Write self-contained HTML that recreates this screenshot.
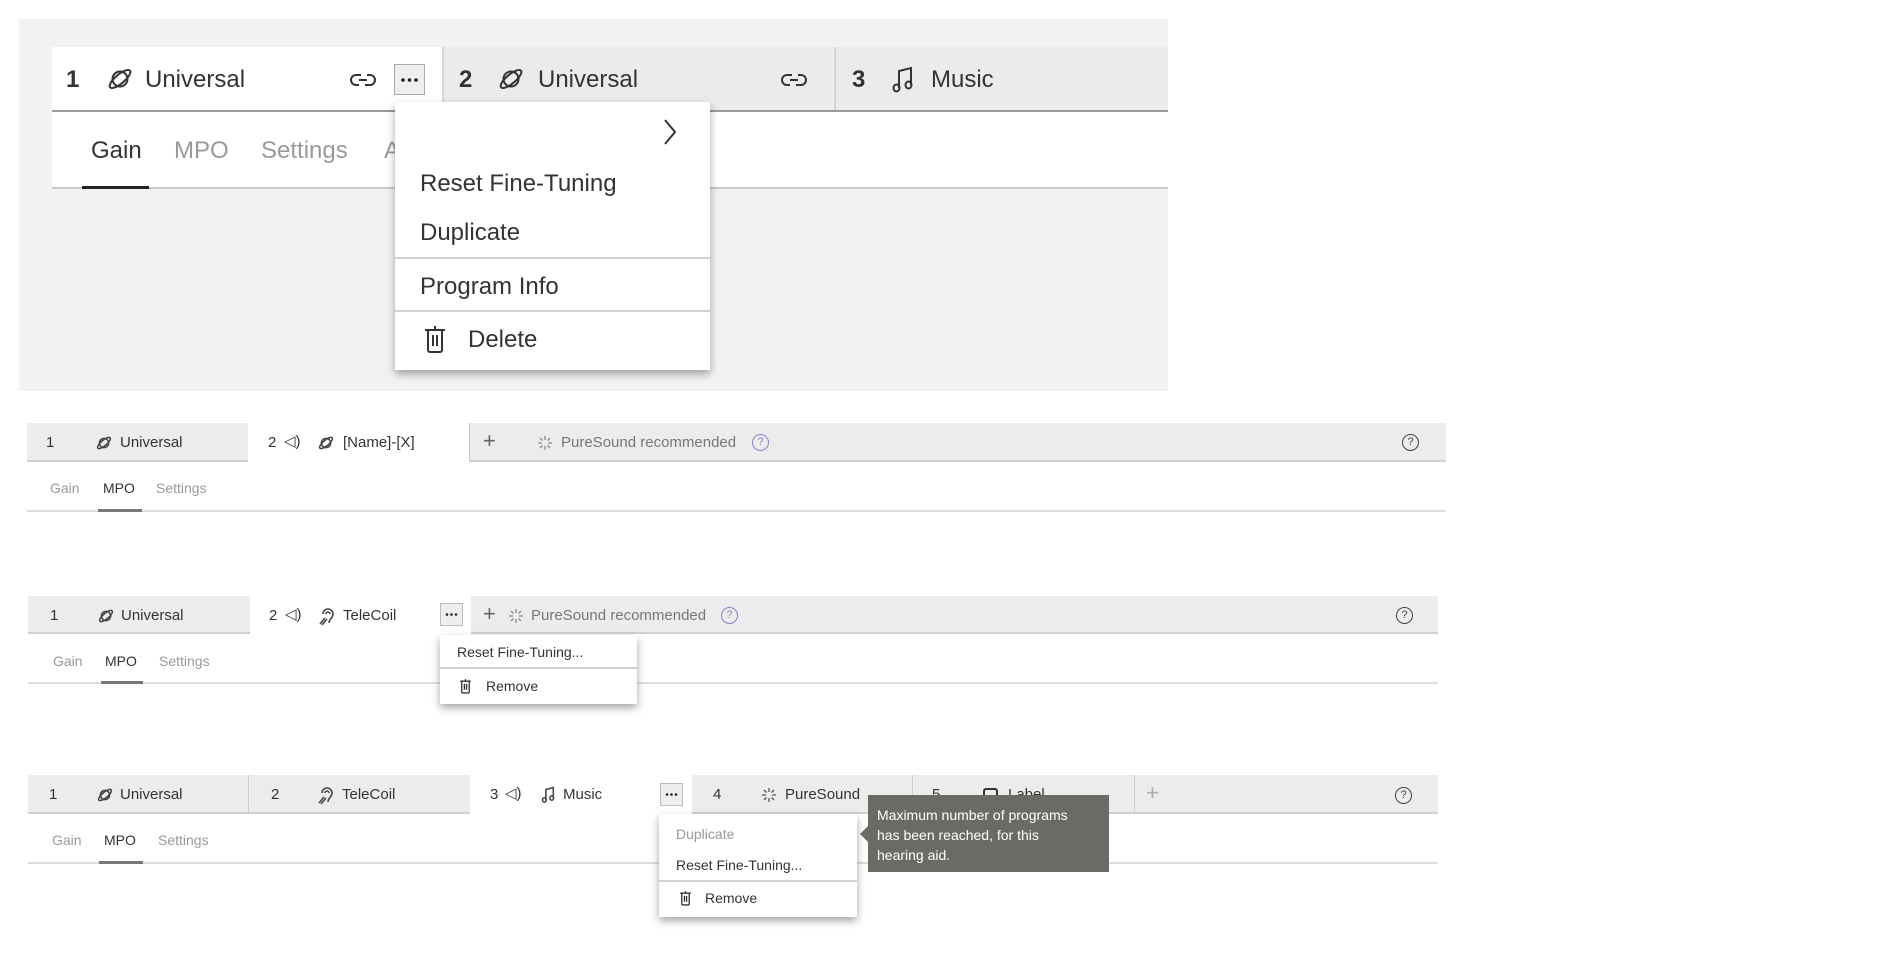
<!DOCTYPE html>
<html><head><meta charset="utf-8"><style>
*{margin:0;padding:0;box-sizing:border-box}
body{width:1900px;height:958px;background:#fff;position:relative;overflow:hidden;font-family:"Liberation Sans",sans-serif;color:#333}
.a{position:absolute}
.t{position:absolute;white-space:nowrap;line-height:20px;height:20px}
.big{font-size:24px;line-height:30px;height:30px}
.sm{font-size:15px}
.gray{background:#ececec}
.menu{position:absolute;background:#fff;box-shadow:0 4px 8px rgba(0,0,0,.35)}
.hr{position:absolute;height:2px;background:#d0d0d0}
svg{position:absolute;overflow:visible}
</style></head><body>

<!-- TOP PANEL -->
<div class="a" style="left:19px;top:19px;width:1149px;height:372px;background:#f2f2f2"></div>
<div class="a" style="left:52px;top:47px;width:390px;height:64px;background:#fff"></div>
<div class="a gray" style="left:443px;top:47px;width:390px;height:64px;background:#ebebeb"></div>
<div class="a" style="left:442px;top:47px;width:2px;height:64px;background:#d6d6d6"></div>
<div class="a gray" style="left:835px;top:47px;width:333px;height:64px;background:#ebebeb"></div>
<div class="a" style="left:834px;top:47px;width:2px;height:64px;background:#d6d6d6"></div>
<div class="a" style="left:52px;top:110px;width:1116px;height:2px;background:#9a9a9a"></div>
<div class="a" style="left:52px;top:112px;width:1116px;height:76px;background:#fff"></div>
<div class="a" style="left:52px;top:187px;width:1116px;height:2px;background:#c8c8c8"></div>
<div class="a" style="left:82px;top:186px;width:67px;height:3px;background:#222"></div>

<div class="t big" style="left:66px;top:65px;font-weight:bold">1</div>
<svg style="left:107px;top:66px" width="26" height="26" viewBox="0 0 26 26"><circle cx="13" cy="13" r="7.5" fill="none" stroke="#333" stroke-width="2"/><ellipse cx="13" cy="13" rx="13" ry="4.5" transform="rotate(-40 13 13)" fill="none" stroke="#333" stroke-width="2"/></svg>
<div class="t big" style="left:145px;top:65px">Universal</div>
<svg style="left:349px;top:72px" width="28" height="16" viewBox="0 0 28 16"><path d="M12 3 H7 a5 5 0 0 0 0 10 H10 M16 13 H21 a5 5 0 0 0 0 -10 H18 M10 8 H18" stroke="#333" stroke-width="2" fill="none"/></svg>
<div class="a" style="left:394px;top:64px;width:31px;height:31px;border:1.5px solid #aaa;background:#eee"></div>
<svg style="left:394px;top:64px" width="31" height="31"><circle cx="9" cy="16" r="1.8" fill="#222"/><circle cx="15.5" cy="16" r="1.8" fill="#222"/><circle cx="22" cy="16" r="1.8" fill="#222"/></svg>

<div class="t big" style="left:459px;top:65px;font-weight:bold">2</div>
<svg style="left:498px;top:66px" width="26" height="26" viewBox="0 0 26 26"><circle cx="13" cy="13" r="7.5" fill="none" stroke="#333" stroke-width="2"/><ellipse cx="13" cy="13" rx="13" ry="4.5" transform="rotate(-40 13 13)" fill="none" stroke="#333" stroke-width="2"/></svg>
<div class="t big" style="left:538px;top:65px">Universal</div>
<svg style="left:780px;top:72px" width="28" height="16" viewBox="0 0 28 16"><path d="M12 3 H7 a5 5 0 0 0 0 10 H10 M16 13 H21 a5 5 0 0 0 0 -10 H18 M10 8 H18" stroke="#333" stroke-width="2" fill="none"/></svg>
<div class="t big" style="left:852px;top:65px;font-weight:bold">3</div>
<svg style="left:891px;top:66px" width="26" height="28" viewBox="0 0 26 28"><path d="M8 22 V5 L20 2 V19" stroke="#333" stroke-width="2" fill="none"/><ellipse cx="5.5" cy="22" rx="3" ry="3.5" fill="none" stroke="#333" stroke-width="2"/><ellipse cx="17.5" cy="19" rx="3" ry="3.5" fill="none" stroke="#333" stroke-width="2"/></svg>
<div class="t big" style="left:931px;top:65px">Music</div>

<div class="t big" style="left:91px;top:136px">Gain</div>
<div class="t big" style="left:174px;top:136px;color:#999">MPO</div>
<div class="t big" style="left:261px;top:136px;color:#999">Settings</div>
<div class="t big" style="left:384px;top:136px;color:#999">A</div>

<div class="menu" style="left:395px;top:102px;width:315px;height:268px"></div>
<svg style="left:662px;top:118px" width="16" height="28" viewBox="0 0 16 28"><path d="M3 2 L13 14 L3 26" stroke="#333" stroke-width="2" fill="none"/></svg>
<div class="t big" style="left:420px;top:169px">Reset Fine-Tuning</div>
<div class="t big" style="left:420px;top:218px">Duplicate</div>
<div class="hr" style="left:395px;top:257px;width:315px"></div>
<div class="t big" style="left:420px;top:272px">Program Info</div>
<div class="hr" style="left:395px;top:310px;width:315px"></div>
<svg style="left:423px;top:324px" width="24" height="30" viewBox="0 0 24 30"><path d="M2 6 H22 M12 2 V6 M5 6 V26 a2 2 0 0 0 2 2 H17 a2 2 0 0 0 2 -2 V6 M10 11 V22 M14 11 V22" stroke="#333" stroke-width="2" fill="none"/></svg>
<div class="t big" style="left:468px;top:325px">Delete</div>

<!-- ROW 2 -->
<div class="a gray" style="left:27px;top:423px;width:221px;height:39px"></div>
<div class="a gray" style="left:470px;top:423px;width:976px;height:39px"></div>
<div class="a" style="left:27px;top:460px;width:221px;height:2px;background:#d0d0d0"></div>
<div class="a" style="left:470px;top:460px;width:976px;height:2px;background:#d0d0d0"></div>
<div class="a" style="left:469px;top:423px;width:1px;height:39px;background:#ccc"></div>
<div class="t sm" style="left:46px;top:433px">1</div>
<svg style="left:96px;top:435px" width="16" height="16" viewBox="0 0 26 26"><circle cx="13" cy="13" r="7.5" fill="none" stroke="#444" stroke-width="2.5"/><ellipse cx="13" cy="13" rx="13" ry="4.5" transform="rotate(-40 13 13)" fill="none" stroke="#444" stroke-width="2.5"/></svg>
<div class="t sm" style="left:120px;top:433px">Universal</div>
<div class="t sm" style="left:268px;top:433px">2</div>
<div class="t sm" style="left:284px;top:432px">◁)</div>
<svg style="left:318px;top:435px" width="16" height="16" viewBox="0 0 26 26"><circle cx="13" cy="13" r="7.5" fill="none" stroke="#444" stroke-width="2.5"/><ellipse cx="13" cy="13" rx="13" ry="4.5" transform="rotate(-40 13 13)" fill="none" stroke="#444" stroke-width="2.5"/></svg>
<div class="t sm" style="left:343px;top:433px">[Name]-[X]</div>
<div class="t" style="left:483px;top:431px;font-size:22px;color:#666">+</div>
<svg style="left:537px;top:435px" width="16" height="16" viewBox="0 0 16 16"><path d="M8 1V5M8 11V15M1 8H5M11 8H15M3 3L5.5 5.5M10.5 10.5L13 13M13 3L10.5 5.5M5.5 10.5L3 13" stroke="#888" stroke-width="1.3"/></svg>
<div class="t sm" style="left:561px;top:433px;color:#777">PureSound recommended</div>
<div class="a" style="left:752px;top:434px;width:17px;height:17px;border:1.5px solid #8a7fd0;border-radius:50%;color:#8a7fd0;font-size:11px;text-align:center;line-height:14px">?</div>
<div class="a" style="left:1402px;top:434px;width:17px;height:17px;border:1.5px solid #444;border-radius:50%;color:#444;font-size:11px;text-align:center;line-height:14px">?</div>
<div class="t" style="left:50px;top:478px;font-size:14px;color:#999">Gain</div>
<div class="t" style="left:103px;top:478px;font-size:14px">MPO</div>
<div class="t" style="left:156px;top:478px;font-size:14px;color:#999">Settings</div>
<div class="a" style="left:27px;top:510px;width:1419px;height:2px;background:#ddd"></div>
<div class="a" style="left:98px;top:509px;width:44px;height:3px;background:#777"></div>

<!-- ROW 3 -->
<div class="a gray" style="left:28px;top:596px;width:222px;height:38px"></div>
<div class="a gray" style="left:471px;top:596px;width:967px;height:38px"></div>
<div class="a" style="left:28px;top:632px;width:222px;height:2px;background:#d0d0d0"></div>
<div class="a" style="left:471px;top:632px;width:967px;height:2px;background:#d0d0d0"></div>
<div class="t sm" style="left:50px;top:606px">1</div>
<svg style="left:98px;top:608px" width="16" height="16" viewBox="0 0 26 26"><circle cx="13" cy="13" r="7.5" fill="none" stroke="#444" stroke-width="2.5"/><ellipse cx="13" cy="13" rx="13" ry="4.5" transform="rotate(-40 13 13)" fill="none" stroke="#444" stroke-width="2.5"/></svg>
<div class="t sm" style="left:121px;top:606px">Universal</div>
<div class="t sm" style="left:269px;top:606px">2</div>
<div class="t sm" style="left:285px;top:605px">◁)</div>
<svg style="left:319px;top:606px" width="18" height="20" viewBox="0 0 18 20"><path d="M4 8 a5 5 0 0 1 10 0 c0 4 -4 5 -4 9 M7 8 a2 2 0 0 1 4 0 M1 18 L6 12 M3 19 L8 13" stroke="#444" stroke-width="1.6" fill="none"/></svg>
<div class="t sm" style="left:343px;top:606px">TeleCoil</div>
<div class="a" style="left:440px;top:603px;width:23px;height:23px;border:1px solid #bbb;background:#eee"></div>
<svg style="left:440px;top:603px" width="23" height="23"><circle cx="7" cy="11.5" r="1.3" fill="#222"/><circle cx="11.5" cy="11.5" r="1.3" fill="#222"/><circle cx="16" cy="11.5" r="1.3" fill="#222"/></svg>
<div class="t" style="left:483px;top:604px;font-size:22px;color:#666">+</div>
<svg style="left:508px;top:608px" width="16" height="16" viewBox="0 0 16 16"><path d="M8 1V5M8 11V15M1 8H5M11 8H15M3 3L5.5 5.5M10.5 10.5L13 13M13 3L10.5 5.5M5.5 10.5L3 13" stroke="#888" stroke-width="1.3"/></svg>
<div class="t sm" style="left:531px;top:606px;color:#777">PureSound recommended</div>
<div class="a" style="left:721px;top:607px;width:17px;height:17px;border:1.5px solid #8a7fd0;border-radius:50%;color:#8a7fd0;font-size:11px;text-align:center;line-height:14px">?</div>
<div class="a" style="left:1396px;top:607px;width:17px;height:17px;border:1.5px solid #444;border-radius:50%;color:#444;font-size:11px;text-align:center;line-height:14px">?</div>
<div class="t" style="left:53px;top:651px;font-size:14px;color:#999">Gain</div>
<div class="t" style="left:105px;top:651px;font-size:14px">MPO</div>
<div class="t" style="left:159px;top:651px;font-size:14px;color:#999">Settings</div>
<div class="a" style="left:28px;top:682px;width:1410px;height:2px;background:#ddd"></div>
<div class="a" style="left:101px;top:681px;width:42px;height:3px;background:#777"></div>
<div class="menu" style="left:440px;top:635px;width:197px;height:69px"></div>
<div class="t" style="left:457px;top:642px;font-size:14px">Reset Fine-Tuning...</div>
<div class="hr" style="left:440px;top:667px;width:197px"></div>
<svg style="left:459px;top:678px" width="13" height="16" viewBox="0 0 24 30"><path d="M2 6 H22 M12 2 V6 M5 6 V26 a2 2 0 0 0 2 2 H17 a2 2 0 0 0 2 -2 V6 M10 11 V22 M14 11 V22" stroke="#333" stroke-width="2.5" fill="none"/></svg>
<div class="t" style="left:486px;top:676px;font-size:14px">Remove</div>

<!-- ROW 4 -->
<div class="a gray" style="left:28px;top:775px;width:442px;height:39px"></div>
<div class="a" style="left:248px;top:775px;width:1px;height:39px;background:#ccc"></div>
<div class="a gray" style="left:692px;top:775px;width:746px;height:39px"></div>
<div class="a" style="left:912px;top:775px;width:1px;height:39px;background:#ccc"></div>
<div class="a" style="left:1134px;top:775px;width:1px;height:39px;background:#ccc"></div>
<div class="a" style="left:28px;top:812px;width:442px;height:2px;background:#d0d0d0"></div>
<div class="a" style="left:692px;top:812px;width:746px;height:2px;background:#d0d0d0"></div>
<div class="t sm" style="left:49px;top:785px">1</div>
<svg style="left:97px;top:787px" width="16" height="16" viewBox="0 0 26 26"><circle cx="13" cy="13" r="7.5" fill="none" stroke="#444" stroke-width="2.5"/><ellipse cx="13" cy="13" rx="13" ry="4.5" transform="rotate(-40 13 13)" fill="none" stroke="#444" stroke-width="2.5"/></svg>
<div class="t sm" style="left:120px;top:785px">Universal</div>
<div class="t sm" style="left:271px;top:785px">2</div>
<svg style="left:318px;top:785px" width="18" height="20" viewBox="0 0 18 20"><path d="M4 8 a5 5 0 0 1 10 0 c0 4 -4 5 -4 9 M7 8 a2 2 0 0 1 4 0 M1 18 L6 12 M3 19 L8 13" stroke="#444" stroke-width="1.6" fill="none"/></svg>
<div class="t sm" style="left:342px;top:785px">TeleCoil</div>
<div class="t sm" style="left:490px;top:785px">3</div>
<div class="t sm" style="left:505px;top:784px">◁)</div>
<svg style="left:541px;top:786px" width="16" height="18" viewBox="0 0 26 28"><path d="M8 22 V5 L20 2 V19" stroke="#444" stroke-width="2.5" fill="none"/><ellipse cx="5.5" cy="22" rx="3" ry="3.5" fill="none" stroke="#444" stroke-width="2.5"/><ellipse cx="17.5" cy="19" rx="3" ry="3.5" fill="none" stroke="#444" stroke-width="2.5"/></svg>
<div class="t sm" style="left:563px;top:785px">Music</div>
<div class="a" style="left:660px;top:783px;width:23px;height:23px;border:1px solid #bbb;background:#eee"></div>
<svg style="left:660px;top:783px" width="23" height="23"><circle cx="7" cy="11.5" r="1.3" fill="#222"/><circle cx="11.5" cy="11.5" r="1.3" fill="#222"/><circle cx="16" cy="11.5" r="1.3" fill="#222"/></svg>
<div class="t sm" style="left:713px;top:785px">4</div>
<svg style="left:761px;top:787px" width="16" height="16" viewBox="0 0 16 16"><path d="M8 1V5M8 11V15M1 8H5M11 8H15M3 3L5.5 5.5M10.5 10.5L13 13M13 3L10.5 5.5M5.5 10.5L3 13" stroke="#555" stroke-width="1.3"/></svg>
<div class="t sm" style="left:785px;top:785px">PureSound</div>
<div class="t sm" style="left:932px;top:785px">5</div>
<div class="a" style="left:983px;top:788px;width:15px;height:15px;border:2px solid #333;border-radius:3px"></div>
<div class="t sm" style="left:1008px;top:785px">Label</div>
<div class="t" style="left:1146px;top:783px;font-size:22px;color:#aaa">+</div>
<div class="a" style="left:1395px;top:787px;width:17px;height:17px;border:1.5px solid #444;border-radius:50%;color:#444;font-size:11px;text-align:center;line-height:14px">?</div>
<div class="t" style="left:52px;top:830px;font-size:14px;color:#999">Gain</div>
<div class="t" style="left:104px;top:830px;font-size:14px">MPO</div>
<div class="t" style="left:158px;top:830px;font-size:14px;color:#999">Settings</div>
<div class="a" style="left:28px;top:862px;width:1410px;height:2px;background:#ddd"></div>
<div class="a" style="left:99px;top:861px;width:44px;height:3px;background:#777"></div>
<div class="menu" style="left:659px;top:814px;width:198px;height:103px"></div>
<div class="t" style="left:676px;top:824px;font-size:14px;color:#999">Duplicate</div>
<div class="t" style="left:676px;top:855px;font-size:14px">Reset Fine-Tuning...</div>
<div class="hr" style="left:659px;top:880px;width:198px"></div>
<svg style="left:679px;top:890px" width="13" height="16" viewBox="0 0 24 30"><path d="M2 6 H22 M12 2 V6 M5 6 V26 a2 2 0 0 0 2 2 H17 a2 2 0 0 0 2 -2 V6 M10 11 V22 M14 11 V22" stroke="#333" stroke-width="2.5" fill="none"/></svg>
<div class="t" style="left:705px;top:888px;font-size:14px">Remove</div>
<div class="a" style="left:868px;top:795px;width:241px;height:77px;background:#6b6b66"></div>
<div class="a" style="left:860px;top:826px;width:0;height:0;border-top:8px solid transparent;border-bottom:8px solid transparent;border-right:8px solid #6b6b66"></div>
<div class="a" style="left:877px;top:805px;font-size:14px;line-height:20px;color:#fff;white-space:nowrap">Maximum number of programs<br>has been reached, for this<br>hearing aid.</div>

</body></html>
